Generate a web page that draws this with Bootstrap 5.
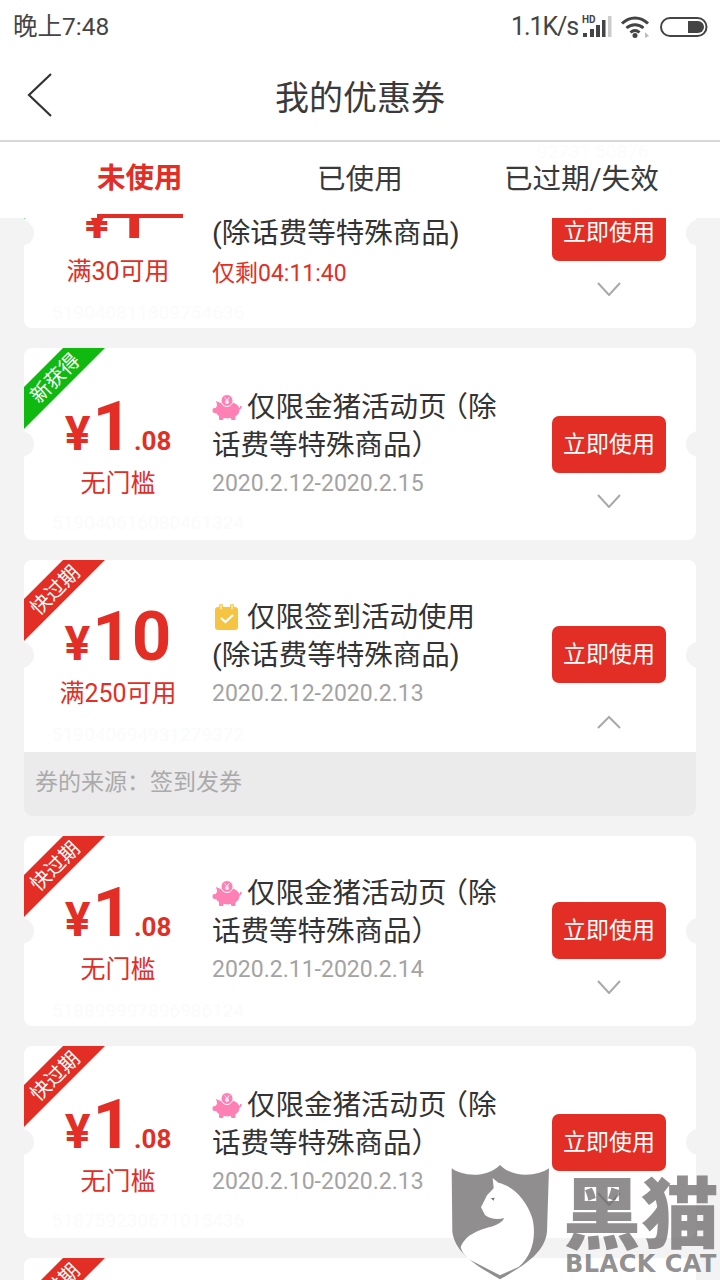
<!DOCTYPE html>
<html lang="zh-CN">
<head>
    <meta charset="UTF-8">
    <meta name="viewport" content="width=device-width, initial-scale=1.0">
    <title>我的优惠券</title>
    <link href="https://cdn.jsdelivr.net/npm/bootstrap@5.3.0/dist/css/bootstrap.min.css" rel="stylesheet">
    <style>
        :root { --coupon-red: #e22e25; }
        html, body { height: 1280px; overflow: hidden; }
        body {
            font-family: Roboto, "Noto Sans CJK SC", sans-serif;
            background: #f3f3f3;
            color: #333;
        }
        .page { width: 720px; height: 1280px; position: relative; overflow: hidden; }

        .status-bar { height: 54px; padding: 0 12px 0 13px; background: #fff; color: #444; font-size: 24.5px; position: relative; z-index: 2; }
        .net-speed { font-size: 25px; letter-spacing: -1.1px; margin-right: 4px; }
        .title-bar { height: 88px; background: #fff; border-bottom: 2px solid #d8d8d8; position: relative; z-index: 2; padding-top: 2px; }
        .title-bar h1 { font-size: 34px; font-weight: 400; margin: 0; color: #3a3a3a; }
        .back-btn { position: absolute; left: 26px; top: 18px; }

        .tab-bar { height: 76px; background: #fff; position: relative; z-index: 2; }
        .tab-item { font-size: 28.6px; color: #3a3a3a; position: absolute; top: 17px; line-height: 40px; }
        .tab-item.active { color: var(--coupon-red); font-weight: 700; left: 97px; font-size: 28.5px; }
        .tab-item.active::after {
            content: ""; position: absolute; left: 0; right: 0; top: 55px; height: 4px; background: var(--coupon-red);
        }
        .tab-used { left: 317px; }
        .tab-expired { left: 504px; }
        .ghost-serial { position: absolute; left: 537px; top: 4px; font-size: 19px; line-height: 12px; color: #fcfcfc; }

        .coupon-list { padding: 0 24px; display: flex; flex-direction: column; gap: 20px; margin-top: -80px; }
        .coupon { background: #fff; border-radius: 8px; overflow: hidden; flex-shrink: 0; }
        .coupon-body { height: 192px; position: relative; display: flex; --shift: 0px; }
        .coupon-body.short { height: 190px; --shift: -2px; }
        .coupon-body.nudged { --shift: -2px; }
        .coupon-body::before, .coupon-body::after {
            content: ""; position: absolute; width: 26px; height: 26px; border-radius: 50%;
            background: #f3f3f3; top: calc(83px + var(--shift) / 2);
        }
        .coupon-body::before { left: -16px; }
        .coupon-body::after { right: -16px; }

        .ribbon {
            position: absolute; left: 0; top: 0; width: 81px; height: 81px;
            clip-path: polygon(39px 0, 81px 0, 0 81px, 0 39px);
            color: #fff; font-size: 20px; background: var(--coupon-red);
        }
        .ribbon.fresh { background: #0fb90f; }
        .ribbon span {
            position: absolute; left: 1px; top: 0; width: 60px; line-height: 60px; text-align: center;
            white-space: nowrap; transform: rotate(-45deg); transform-origin: center;
        }
        .price-col { width: 188px; flex-shrink: 0; text-align: center; color: var(--coupon-red); padding-top: calc(45px + var(--shift)); }
        .price { line-height: 68px; height: 68px; white-space: nowrap; font-weight: 700; }
        .price-sign { font-size: 48px; margin-right: 2px; }
        .price-num { font-size: 69px; }
        .price-cents { font-size: 26px; margin-left: 2px; }
        .price-rule { font-size: 25px; line-height: 34px; margin-top: 6px; }

        .info-col { flex: 1; padding-top: calc(41px + var(--shift)); }
        .info-title { width: 290px; font-size: 28.5px; line-height: 38px; color: #333; }
        .info-title.tail { padding-top: 38px; }
        .info-title svg { vertical-align: -3px; margin-right: 5px; }
        .wide-paren { margin-left: -7px; }
        .info-date { font-size: 23px; line-height: 38px; color: #a3a3a3; }
        .info-date.countdown { color: var(--coupon-red); margin-top: 2px; }

        .action-col { width: 114px; margin-right: 30px; flex-shrink: 0; text-align: center; padding-top: calc(68px + var(--shift)); }
        .use-btn {
            width: 114px; height: 57px; padding: 1px 0 0; border: 0; border-radius: 7px;
            background: var(--coupon-red); color: #fff; font-size: 23px;
        }
        .fold-icon { display: block; margin: 21px auto 0; }
        .fold-icon.open { margin-top: 32px; }
        .serial { position: absolute; left: 28px; top: 162px; font-size: 19px; line-height: 26px; color: #fbfbfb; }
        .coupon-source { height: 64px; background: #ebebeb; color: #aaa; font-size: 23px; line-height: 62px; padding-left: 11px; }

        .watermark { position: absolute; left: 445px; top: 1160px; width: 275px; height: 120px; z-index: 3; pointer-events: none; }
        .watermark svg { position: absolute; left: 0; top: 0; }
        .mark-cn {
            position: absolute; left: 118px; top: 14px; font-family: "Noto Sans CJK SC", sans-serif; font-weight: 900;
            font-size: 78px; line-height: 70px; color: rgba(105, 103, 103, .74); white-space: nowrap;
        }
        .mark-en {
            position: absolute; left: 120px; top: 93px; font-family: "DejaVu Sans", sans-serif; font-weight: 700;
            font-size: 24px; line-height: 22px; letter-spacing: .5px; color: rgba(105, 103, 103, .74); white-space: nowrap;
        }
    </style>
</head>
<body>
<svg width="0" height="0" class="position-absolute">
    <defs>
        <symbol id="pig" viewBox="0 0 30 26">
            <path d="M4 7l6 2.500-4 5z" fill="#ff80b5"/>
            <ellipse cx="15.500" cy="16" rx="12" ry="8.500" fill="#ff80b5"/>
            <rect x="0.500" y="14" width="6" height="5" rx="2" fill="#ff80b5"/>
            <rect x="7" y="21" width="4.500" height="5" rx="1" fill="#ff80b5"/>
            <rect x="19" y="21" width="4.500" height="5" rx="1" fill="#ff80b5"/>
            <path d="M26 15c2 0 3-1 3-3" stroke="#ff80b5" stroke-width="1.500" fill="none"/>
            <circle cx="15" cy="6.500" r="6" fill="#ff80b5" stroke="#fff" stroke-width="1"/>
            <path d="M12.800 3.500l2.200 3 2.200-3M15 6.500v3.500M13 7.200h4M13 8.800h4" stroke="#fff" stroke-width="1" fill="none"/>
        </symbol>
        <symbol id="sign" viewBox="0 0 30 26">
            <rect x="3" y="3" width="23" height="23" rx="3" fill="#f5c542"/>
            <rect x="7.500" y="0" width="3" height="6" rx="1.500" fill="#fbe39a" stroke="#f5c542"/>
            <rect x="18.500" y="0" width="3" height="6" rx="1.500" fill="#fbe39a" stroke="#f5c542"/>
            <path d="M9 14l4.500 4 7.500-7" stroke="#fff" stroke-width="2.200" fill="none"/>
        </symbol>
        <symbol id="chev-down" viewBox="0 0 24 14">
            <path d="M1 1l11 12L23 1" stroke="#a9a9a9" stroke-width="2" fill="none"/>
        </symbol>
        <symbol id="chev-up" viewBox="0 0 24 14">
            <path d="M1 13L12 2l11 11" stroke="#a9a9a9" stroke-width="2" fill="none"/>
        </symbol>
    </defs>
</svg>

<div class="page">
    <div class="status-bar d-flex align-items-center justify-content-between">
        <span>晚上7:48</span>
        <div class="d-flex align-items-center">
            <span class="net-speed">1.1K/s</span>
            <svg width="30" height="24" viewBox="0 0 30 24" class="me-2">
                <text x="0" y="8" font-family="Roboto" font-weight="700" font-size="10" fill="#444">HD</text>
                <rect x="1" y="18" width="4" height="4" fill="#444"/>
                <rect x="8" y="14" width="4" height="8" fill="#444"/>
                <rect x="14" y="10" width="4" height="12" fill="#444"/>
                <rect x="20" y="5" width="3.500" height="17" fill="#444"/>
                <rect x="26" y="1" width="3.500" height="21" fill="#ccc"/>
            </svg>
            <svg width="32" height="24" viewBox="0 0 32 24" class="me-2">
                <path d="M2 8.500C9.500 1 20.500 1 28 8.500M6.500 13C11.500 8.500 18.500 8.500 23.500 13M10.500 17.500c3-2.700 6-2.700 9 0" stroke="#444" stroke-width="3" fill="none"/>
                <circle cx="15" cy="20.500" r="2.500" fill="#444"/>
                <path d="M25 17v6l4-2z" fill="#bbb"/>
            </svg>
            <svg width="48" height="20" viewBox="0 0 48 20">
                <rect x="1" y="1" width="45.500" height="18" rx="9" fill="none" stroke="#444" stroke-width="2"/>
                <path d="M28 4h10a6 6 0 0 1 0 12H28z" fill="#444"/>
            </svg>
        </div>
    </div>

    <div class="title-bar d-flex align-items-center justify-content-center">
        <svg class="back-btn" width="28" height="46" viewBox="0 0 28 46">
            <path d="M25 2L3 23l22 21" stroke="#333" stroke-width="2.200" fill="none"/>
        </svg>
        <h1>我的优惠券</h1>
    </div>

    <div class="tab-bar">
        <span class="ghost-serial">92731 50876</span>
        <span class="tab-item active">未使用</span>
        <span class="tab-item tab-used">已使用</span>
        <span class="tab-item tab-expired">已过期/失效</span>
    </div>

    <div class="coupon-list">
        <div class="coupon">
            <div class="coupon-body short">
                <div class="ribbon fresh"></div>
                <div class="price-col">
                    <div class="price"><span class="price-sign">¥</span><span class="price-num">1</span></div>
                    <div class="price-rule">满30可用</div>
                </div>
                <div class="info-col">
                    <div class="info-title tail">(除话费等特殊商品)</div>
                    <div class="info-date countdown">仅剩04:11:40</div>
                </div>
                <div class="action-col">
                    <button class="use-btn">立即使用</button>
                    <svg class="fold-icon" width="24" height="14"><use href="#chev-down"/></svg>
                </div>
                <span class="serial">519040811809754636</span>
            </div>
        </div>

        <div class="coupon">
            <div class="coupon-body">
                <div class="ribbon fresh"><span>新获得</span></div>
                <div class="price-col">
                    <div class="price"><span class="price-sign">¥</span><span class="price-num">1</span><span class="price-cents">.08</span></div>
                    <div class="price-rule">无门槛</div>
                </div>
                <div class="info-col">
                    <div class="info-title"><svg width="30" height="26"><use href="#pig"/></svg>仅限金猪活动页<span class="wide-paren">（</span>除话费等特殊商品）</div>
                    <div class="info-date">2020.2.12-2020.2.15</div>
                </div>
                <div class="action-col">
                    <button class="use-btn">立即使用</button>
                    <svg class="fold-icon" width="24" height="14"><use href="#chev-down"/></svg>
                </div>
                <span class="serial">519040616080461324</span>
            </div>
        </div>

        <div class="coupon">
            <div class="coupon-body nudged">
                <div class="ribbon"><span>快过期</span></div>
                <div class="price-col">
                    <div class="price"><span class="price-sign">¥</span><span class="price-num">10</span></div>
                    <div class="price-rule">满250可用</div>
                </div>
                <div class="info-col">
                    <div class="info-title"><svg width="30" height="26"><use href="#sign"/></svg>仅限签到活动使用(除话费等特殊商品)</div>
                    <div class="info-date">2020.2.12-2020.2.13</div>
                </div>
                <div class="action-col">
                    <button class="use-btn">立即使用</button>
                    <svg class="fold-icon open" width="24" height="14"><use href="#chev-up"/></svg>
                </div>
                <span class="serial">519040694931279372</span>
            </div>
            <div class="coupon-source">券的来源：签到发券</div>
        </div>

        <div class="coupon">
            <div class="coupon-body short">
                <div class="ribbon"><span>快过期</span></div>
                <div class="price-col">
                    <div class="price"><span class="price-sign">¥</span><span class="price-num">1</span><span class="price-cents">.08</span></div>
                    <div class="price-rule">无门槛</div>
                </div>
                <div class="info-col">
                    <div class="info-title"><svg width="30" height="26"><use href="#pig"/></svg>仅限金猪活动页<span class="wide-paren">（</span>除话费等特殊商品）</div>
                    <div class="info-date">2020.2.11-2020.2.14</div>
                </div>
                <div class="action-col">
                    <button class="use-btn">立即使用</button>
                    <svg class="fold-icon" width="24" height="14"><use href="#chev-down"/></svg>
                </div>
                <span class="serial">518899997896986124</span>
            </div>
        </div>

        <div class="coupon">
            <div class="coupon-body">
                <div class="ribbon"><span>快过期</span></div>
                <div class="price-col">
                    <div class="price"><span class="price-sign">¥</span><span class="price-num">1</span><span class="price-cents">.08</span></div>
                    <div class="price-rule">无门槛</div>
                </div>
                <div class="info-col">
                    <div class="info-title"><svg width="30" height="26"><use href="#pig"/></svg>仅限金猪活动页<span class="wide-paren">（</span>除话费等特殊商品）</div>
                    <div class="info-date">2020.2.10-2020.2.13</div>
                </div>
                <div class="action-col">
                    <button class="use-btn">立即使用</button>
                    <svg class="fold-icon" width="24" height="14"><use href="#chev-down"/></svg>
                </div>
                <span class="serial">518759230671015436</span>
            </div>
        </div>

        <div class="coupon">
            <div class="coupon-body">
                <div class="ribbon"><span>快过期</span></div>
            </div>
        </div>
    </div>

    <div class="watermark">
        <svg width="110" height="120" viewBox="0 0 330 360">
            <path d="M20 25C45 45 120 60 165 15C210 60 285 45 312 25L306 215C300 280 230 320 165 358C100 320 30 280 22 215z" fill="rgba(105,103,103,.74)"/>
            <path d="M143 54L160 68C205 78 245 120 262 175C275 230 262 285 222 320L165 346L70 297C58 285 50 275 47 262C62 220 110 208 145 198C160 192 172 186 178 174C160 180 135 178 120 165L108 142L126 106L146 85z" fill="#fff"/>
            <path d="M137 115l12-2-3 9z" fill="#777"/>
        </svg>
        <span class="mark-cn">黑猫</span>
        <span class="mark-en">BLACK CAT</span>
    </div>
</div>

<script src="https://cdn.jsdelivr.net/npm/bootstrap@5.3.0/dist/js/bootstrap.bundle.min.js"></script>
</body>
</html>
